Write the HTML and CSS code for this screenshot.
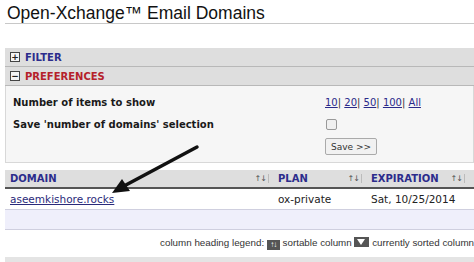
FILE: index.html
```html
<!DOCTYPE html>
<html>
<head>
<meta charset="utf-8">
<link rel="stylesheet" href="styles.css">
</head>
<body>
<div class="page">
  <h1 class="title">Open-Xchange™ Email Domains</h1>
  <div class="section-bar">
    <span class="toggle">+</span><span class="bar-label filter">FILTER</span>
  </div>
  <div class="section-bar">
    <span class="toggle">−</span><span class="bar-label prefs">PREFERENCES</span>
  </div>
  <div class="prefs-panel">
    <div class="pref-row">
      <div class="pref-label">Number of items to show</div>
      <div class="pref-value links"><a href="#">10</a>| <a href="#">20</a>| <a href="#">50</a>| <a href="#">100</a>| <a href="#">All</a></div>
    </div>
    <div class="pref-row">
      <div class="pref-label">Save 'number of domains' selection</div>
      <div class="pref-value"><span class="checkbox"></span></div>
    </div>
    <div class="pref-row">
      <div class="pref-label"></div>
      <div class="pref-value"><button class="save-btn">Save &gt;&gt;</button></div>
    </div>
  </div>
  <div class="table">
    <div class="thead">
      <div class="th col-domain"><span>DOMAIN</span><span class="sort">↑↓</span></div>
      <div class="th col-plan"><span>PLAN</span><span class="sort">↑↓</span></div>
      <div class="th col-exp"><span>EXPIRATION</span><span class="sort">↑↓</span></div>
    </div>
    <div class="tr">
      <div class="td col-domain"><a href="#">aseemkishore.rocks</a></div>
      <div class="td col-plan">ox-private</div>
      <div class="td col-exp">Sat, 10/25/2014</div>
    </div>
    <div class="tr alt"></div>
  </div>
  <div class="legend">column heading legend: <span class="lg-sort">↑↓</span> sortable column <span class="lg-sorted"></span> currently sorted column</div>
  <div class="bottom-bar"></div>
</div>
<svg class="arrow" width="474" height="262" viewBox="0 0 474 262">
  <line x1="197" y1="147" x2="124" y2="186" stroke="#111" stroke-width="3.5" stroke-linecap="round"/>
  <polygon points="112,193 122,179 130,191" fill="#111"/>
</svg>
</body>
</html>
```

FILE: styles.css
```css
html, body {
  margin: 0;
  padding: 0;
  background: #fff;
}
body {
  width: 474px;
  height: 262px;
  overflow: hidden;
  position: relative;
  font-family: "DejaVu Sans", Verdana, sans-serif;
  font-size: 10px;
  color: #222;
}
.page {
  padding-left: 5px;
}
.title {
  margin: 0;
  padding: 4px 0 1px 2px;
  font-family: "Liberation Sans", Arial, sans-serif;
  font-weight: normal;
  font-size: 17.5px;
  line-height: 18px;
  color: #111;
  border-bottom: 1px solid #c8c8c8;
  margin-bottom: 24px;
}
.section-bar {
  height: 18px;
  background: #dedede;
  border-bottom: 1px solid #b8b8b8;
  display: flex;
  align-items: center;
  padding-left: 5px;
}
.toggle {
  width: 8px;
  height: 8px;
  border: 1px solid #444;
  font-size: 9px;
  line-height: 8px;
  text-align: center;
  color: #222;
  margin-right: 5px;
  font-weight: bold;
  background: #f4f4f4;
}
.bar-label {
  font-weight: bold;
  font-size: 10px;
}
.filter { color: #2c2c8c; }
.prefs { color: #b5212a; }
.prefs-panel {
  background: #f6f6f6;
  border: 1px solid #d8d8d8;
  border-top: none;
  padding: 6px 0 5px 7px;
  height: 65px;
}
.pref-row {
  display: flex;
  align-items: center;
  height: 21px;
}
.pref-row:nth-child(2) { height: 23px; }
.pref-label {
  width: 312px;
  font-weight: bold;
  font-size: 10px;
  color: #1a1a1a;
}
.pref-value { font-size: 10px; color: #333; }
.links a { color: #2a2a8a; }
.checkbox {
  display: block;
  width: 9px;
  height: 9px;
  border: 1px solid #999;
  border-radius: 2px;
  background: #f0f0f0;
  margin-left: 1px;
}
.save-btn {
  font-family: "DejaVu Sans", Verdana, sans-serif;
  font-size: 9px;
  color: #333;
  background: #f1f1f1;
  border: 1px solid #aaa;
  border-radius: 2px;
  padding: 2px 5px;
  height: 17px;
}
.table {
  margin-top: 7px;
}
.thead {
  display: flex;
  height: 17px;
  background: #dedede;
  border-bottom: 2px solid #555;
  align-items: center;
}
.th {
  display: flex;
  justify-content: space-between;
  align-items: center;
  font-weight: bold;
  color: #2c2c8c;
  font-size: 10px;
  box-sizing: border-box;
  padding-left: 5px;
  padding-right: 4px;
}
.sort {
  font-size: 8px;
  font-weight: normal;
  color: #555;
  border-right: 1px solid #bbb;
  padding-right: 2px;
  letter-spacing: -1px;
}
.col-domain { width: 268px; }
.col-plan { width: 93px; }
.col-exp { width: 103px; }
.tr {
  display: flex;
  height: 20px;
  align-items: center;
  border-bottom: 1px solid #cfcfdf;
}
.td {
  padding-left: 5px;
  box-sizing: border-box;
  font-size: 10.5px;
  color: #222;
}
.td a { color: #2a2a7a; }
.tr.alt {
  background: #efeffb;
  height: 19px;
}
.legend {
  text-align: right;
  white-space: nowrap;
  font-family: "Liberation Sans", Arial, sans-serif;
  font-size: 9.8px;
  color: #333;
  margin-top: 6px;
  margin-right: 0;
  height: 14px;
  line-height: 14px;
}
.lg-sort {
  display: inline-block;
  width: 13px;
  text-align: center;
  background: #555;
  color: #fff;
  font-size: 8px;
  line-height: 10px;
  letter-spacing: -1px;
  vertical-align: -1px;
}
.lg-sorted {
  display: inline-block;
  width: 15px;
  height: 10px;
  background: #555;
  position: relative;
  vertical-align: -1px;
}
.lg-sorted::after {
  content: "";
  position: absolute;
  left: 3px;
  top: 2px;
  border-left: 4.5px solid transparent;
  border-right: 4.5px solid transparent;
  border-top: 6px solid #fff;
}
.bottom-bar {
  margin-top: 7px;
  height: 10px;
  background: #e4e4e4;
}
.arrow {
  position: absolute;
  left: 0;
  top: 0;
  pointer-events: none;
}
```
